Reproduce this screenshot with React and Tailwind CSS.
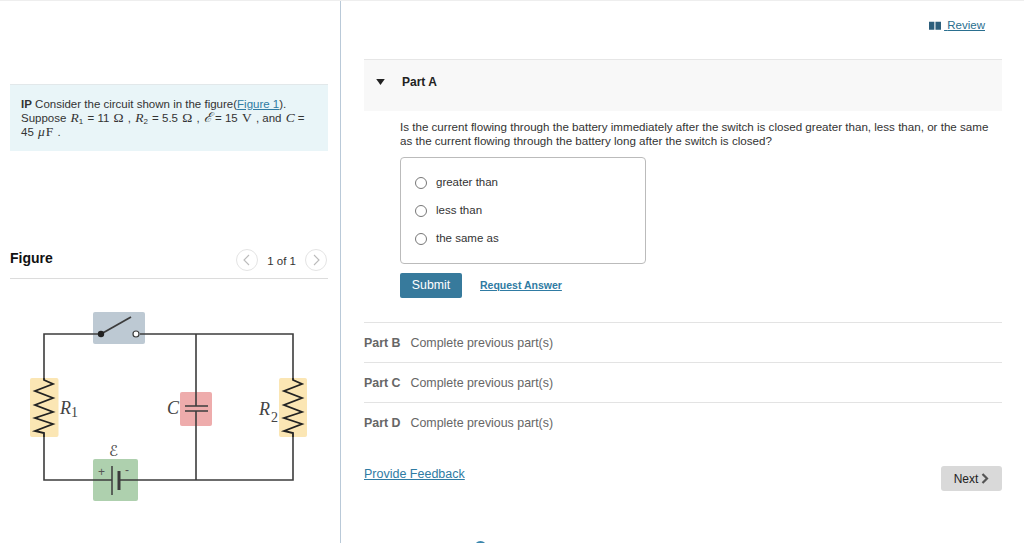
import React from 'react';

const sans = 'font-["Liberation_Sans",Arial,sans-serif]';

const M = ({ children }) => (
  <span className='font-["Liberation_Serif",serif] italic text-[13.5px] leading-[12px] ml-[1px]'>{children}</span>
);
const U = ({ children }) => (
  <span className='font-["Liberation_Serif",serif] text-[13.5px] leading-[12px] mx-[1px]'>{children}</span>
);
const Sub = ({ children }) => (
  <span className="relative top-[2px] text-[8px] leading-[8px] mr-[1px]">{children}</span>
);

const Resistor = ({ x }) => (
  <path
    d={`M${x} 378 L${x} 380 L${x + 9} 384 L${x - 9} 391 L${x + 9} 398 L${x - 9} 405 L${x + 9} 412 L${x - 9} 418 L${x + 9} 424 L${x - 9} 431 L${x} 433 L${x} 437`}
    fill="none"
    stroke="#222"
    strokeWidth="1.8"
  />
);

const Circuit = () => (
  <svg width="318" height="230" viewBox="10 290 318 230" className="block">
    <rect x="93" y="312" width="52" height="32" rx="2" fill="#bdc9d3" />
    <rect x="30" y="378" width="28.5" height="59" rx="2" fill="#fbe6b4" />
    <rect x="279" y="378" width="28" height="59" rx="2" fill="#fbe6b4" />
    <rect x="180" y="392" width="32" height="34" rx="2" fill="#eeacac" />
    <rect x="93" y="459" width="45" height="42" rx="2" fill="#aed0ae" />
    <g fill="none" stroke="#3c3c3c" strokeWidth="1.6">
      <path d="M101 334 L44 334 L44 378" />
      <path d="M44 437 L44 480 L112 480" />
      <path d="M120 480 L293 480 L293 437" />
      <path d="M293 378 L293 334 L140 334" />
      <path d="M196 334 L196 406" />
      <path d="M196 411 L196 480" />
      <path d="M185 406 L208 406 M185 411 L208 411" strokeWidth="1.5" />
      <path d="M112 466 L112 495" strokeWidth="1.5" />
      <path d="M119 471 L119 490" strokeWidth="3" />
      <path d="M101 334 L131 317" strokeWidth="1.8" />
      <circle cx="136" cy="334" r="3" fill="#fff" strokeWidth="1.2" />
    </g>
    <circle cx="101" cy="334" r="3.2" fill="#222" />
    <Resistor x={44} />
    <Resistor x={293} />
    <g fill="#444" fontFamily="Liberation Serif, serif" fontSize="18">
      <text x="60" y="414" fontStyle="italic">R</text>
      <text x="71" y="417" fontSize="14">1</text>
      <text x="167" y="414" fontStyle="italic">C</text>
      <text x="259" y="415" fontStyle="italic">R</text>
      <text x="271" y="422" fontSize="14">2</text>
      <text x="109" y="456" fontFamily="DejaVu Sans, sans-serif" fontSize="15">ℰ</text>
    </g>
    <g fill="#555" fontFamily="Liberation Sans, sans-serif" fontSize="12">
      <text x="98" y="476">+</text>
      <text x="125" y="474">-</text>
    </g>
  </svg>
);

const Chevron = ({ d }) => (
  <span className="w-[22px] h-[22px] rounded-full border border-[#e4e4e4] flex items-center justify-center">
    <svg width="10" height="12" viewBox="0 0 10 12" fill="none" stroke="#bbb" strokeWidth="1.1">
      <path d={d} />
    </svg>
  </span>
);

const LockedPart = ({ name }) => (
  <div className="h-[40px] border-t border-[#e3e3e3] pt-[1px] flex items-center gap-[10px] text-[12.4px] text-[#666]">
    <b className="font-bold">{name}</b>
    <span>Complete previous part(s)</span>
  </div>
);

const Option = ({ label }) => (
  <div className="h-[28px] flex items-center gap-[9px] text-[11.5px] text-[#333]">
    <span className="w-[12px] h-[12px] rounded-full border border-[#777] bg-white" />
    <span className="mt-[-1px]">{label}</span>
  </div>
);

export default function App() {
  return (
    <div className={`${sans} relative w-[1024px] h-[543px] overflow-hidden bg-white border-t border-[#eeeeee] flex text-[#333]`}>
      <div className="w-[341px] h-full border-r border-[#b9c9d8] pl-[10px] pr-[12px] pt-[83px] shrink-0">
        <div className="h-[67px] bg-[#e9f5f8] border-t border-[#e2e8ea] pl-[11px] pr-[16px] pt-[12px] text-[11.5px] leading-[14px] text-[#333]">
          <b>IP</b> Consider the circuit shown in the figure(<a className="text-[#2f7ba3] underline">Figure 1</a>). Suppose <M>R</M><Sub>1</Sub> = 11 <U>Ω</U> , <M>R</M><Sub>2</Sub> = 5.5 <U>Ω</U> , <M>ℰ</M> = 15 <U>V</U> , and <M>C</M> = 45 <M>μ</M><U>F</U> .
        </div>
        <div className="mt-[92px] h-[36px] border-b border-[#dcdcdc] flex items-start justify-between">
          <span className="text-[14px] font-bold text-[#111] leading-[30px]">Figure</span>
          <div className="flex items-center text-[11.5px] text-[#333] gap-[9px] mt-[6px] pr-[1px]">
            <Chevron d="M7 1 L2 6 L7 11" />
            <span className="mt-[3px]">1 of 1</span>
            <Chevron d="M3 1 L8 6 L3 11" />
          </div>
        </div>
        <div className="mt-[11px]">
          <Circuit />
        </div>
      </div>
      <div className="flex-1 pl-[23px] pr-[22px]">
        <div className="h-[58px] flex justify-end items-start pt-[16px] pr-[17px]">
          <div className="flex items-center text-[11.5px] whitespace-nowrap">
            <svg width="12" height="9" viewBox="0 0 13 9" fill="#2d5f7c">
              <path d="M0 0.5 H5.8 V9 H0 Z M7 0.5 H13 V9 H7 Z" />
            </svg>
            <a className="ml-[3px] text-[#2a6f8f] underline">{'\u00a0'}Review</a>
          </div>
        </div>
        <div className="h-[52px] bg-[#f8f8f8] border-t border-[#e6e6e6] flex items-center pb-[8px] pl-[12px]">
          <svg width="9" height="6" viewBox="0 0 10 7" fill="#222">
            <path d="M0 0 H10 L5 7 Z" />
          </svg>
          <span className="ml-[17px] text-[12px] font-bold text-[#222]">Part A</span>
        </div>
        <div className="pl-[36px] pt-[9px]">
          <p className="text-[11.6px] leading-[14px] text-[#333] pr-[6px]">
            Is the current flowing through the battery immediately after the switch is closed greater than, less than, or the same as the current flowing through the battery long after the switch is closed?
          </p>
          <div className="mt-[9px] w-[246px] h-[107px] border border-[#bbbbbb] rounded-[4px] pl-[14px] pt-[11px]">
            <Option label="greater than" />
            <Option label="less than" />
            <Option label="the same as" />
          </div>
          <div className="mt-[9px] flex items-center">
            <button className="w-[62px] h-[25px] bg-[#377a9c] rounded-[2px] text-white text-[12.3px]">Submit</button>
            <a className="ml-[18px] text-[10.5px] font-bold text-[#2f7ba3] underline">Request Answer</a>
          </div>
        </div>
        <div className="mt-[24px]">
          <LockedPart name="Part B" />
          <LockedPart name="Part C" />
          <LockedPart name="Part D" />
        </div>
        <div className="mt-[2px] flex justify-between items-start">
          <a className="mt-[21px] text-[12.5px] text-[#2f7ba3] underline">Provide Feedback</a>
          <button className="mt-[22px] w-[61px] h-[25px] rounded-[3px] bg-[#d9d9d9] text-[12px] text-[#222] flex items-center justify-center gap-[3px]">
            Next
            <svg width="8" height="11" viewBox="0 0 8 11" fill="none" stroke="#555" strokeWidth="2.2">
              <path d="M1.5 1 L6 5.5 L1.5 10" />
            </svg>
          </button>
        </div>
      </div>
      <span className="absolute left-[474px] top-[540px] w-[13px] h-[13px] rounded-full border-2 border-[#3a86ad]" />
    </div>
  );
}
